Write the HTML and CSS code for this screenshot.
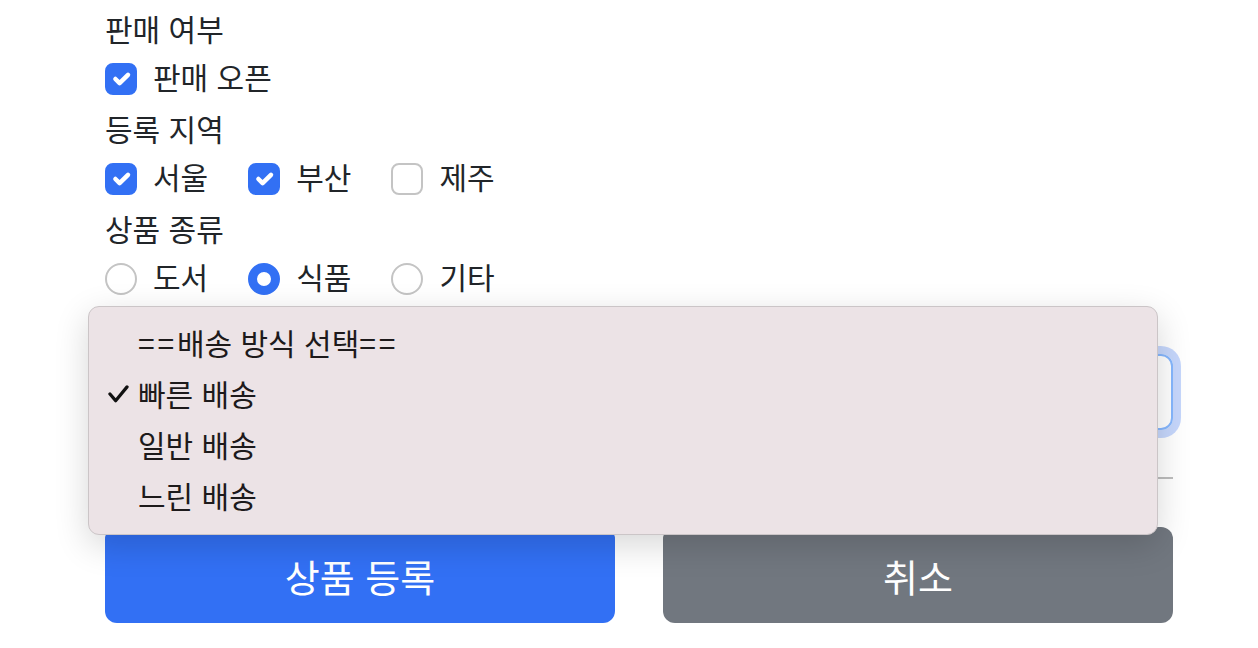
FILE: index.html
```html
<!DOCTYPE html>
<html lang="ko">
<head>
<meta charset="utf-8">
<title>상품 등록</title>
<link rel="stylesheet" href="styles.css">
</head>
<body>
<div class="page">
  <form class="form">
    <div class="label">판매 여부</div>
    <div class="checks">
      <label class="check"><span class="box on"><svg viewBox="0 0 20 20"><path d="m6 10 3 3 6-6" /></svg></span>판매 오픈</label>
    </div>
    <div class="label">등록 지역</div>
    <div class="checks">
      <label class="check"><span class="box on"><svg viewBox="0 0 20 20"><path d="m6 10 3 3 6-6" /></svg></span>서울</label>
      <label class="check"><span class="box on"><svg viewBox="0 0 20 20"><path d="m6 10 3 3 6-6" /></svg></span>부산</label>
      <label class="check"><span class="box"></span>제주</label>
    </div>
    <div class="label">상품 종류</div>
    <div class="checks">
      <label class="check"><span class="radio"></span>도서</label>
      <label class="check"><span class="radio on"></span>식품</label>
      <label class="check"><span class="radio"></span>기타</label>
    </div>
    <div class="label-spacer"></div>
    <div class="select"></div>
    <hr class="divider">
    <div class="buttons">
      <button type="button" class="btn btn-primary">상품 등록</button>
      <button type="button" class="btn btn-secondary">취소</button>
    </div>
  </form>
  <div class="dropdown">
    <div class="option"><span class="eq">==</span>배송 방식 선택<span class="eq">==</span></div>
    <div class="option selected"><svg class="tick" viewBox="0 0 22 20"><path d="M2 9.5 L8 16.5 L20 2" /></svg>빠른 배송</div>
    <div class="option">일반 배송</div>
    <div class="option">느린 배송</div>
  </div>
</div>
</body>
</html>
```

FILE: styles.css
```css
* { box-sizing: border-box; }
html, body { margin: 0; padding: 0; background: #fff; }
body {
  font-family: "Noto Sans CJK KR", "Noto Sans", sans-serif;
  color: #212529;
}
.page {
  position: relative;
  width: 1258px;
  height: 648px;
  overflow: hidden;
}
.form {
  margin-left: 105px;
  width: 1068px;
  padding-top: 4px;
}
.label {
  font-size: 30px;
  line-height: 48px;
  height: 48px;
}
.label-spacer { height: 50px; }
.checks {
  display: flex;
  height: 48px;
  margin-bottom: 4px;
}
.check {
  display: flex;
  align-items: flex-start;
  font-size: 30px;
  line-height: 48px;
  margin-right: 40px;
}
.box, .radio {
  width: 32px;
  height: 32px;
  margin-top: 11px;
  margin-right: 16px;
  border: 2px solid #c4c4c4;
  background: #fff;
  flex: none;
  display: flex;
  align-items: center;
  justify-content: center;
}
.box { border-radius: 8px; }
.box.on { background: #3270f4; border-color: #3270f4; }
.box svg { width: 30px; height: 30px; }
.box svg path { fill: none; stroke: #fff; stroke-width: 3.2; stroke-linecap: round; stroke-linejoin: round; }
.radio { border-radius: 50%; }
.radio.on {
  border: 9px solid #3270f4;
  background: #fff;
}
.select {
  height: 76px;
  border: 2px solid #86b7fe;
  border-radius: 12px;
  box-shadow: 0 0 0 8px rgba(50, 112, 244, 0.28);
}
.divider {
  border: 0;
  border-top: 2px solid #bdbdbd;
  margin: 47px 0 48px;
}
.buttons {
  display: flex;
  gap: 48px;
}
.btn {
  flex: 1;
  height: 96px;
  border: 0;
  border-radius: 12px;
  font-family: inherit;
  font-size: 38px;
  color: #fff;
}
.btn-primary { background: #3270f4; }
.btn-secondary { background: #71777f; }
.dropdown {
  position: absolute;
  left: 88px;
  top: 306px;
  width: 1070px;
  height: 229px;
  padding: 10px 0 12px;
  background: #ece3e6;
  border: 1px solid #cbc5c7;
  border-radius: 11px;
  box-shadow: 0 10px 34px rgba(0, 0, 0, 0.16);
}
.option {
  position: relative;
  height: 51px;
  line-height: 51px;
  padding-left: 49px;
  font-size: 30px;
  color: #1d1a1b;
}
.eq { letter-spacing: 2.8px; }
.tick {
  position: absolute;
  left: 19px;
  top: 17px;
  width: 21px;
  height: 19px;
}
.tick path { fill: none; stroke: #111; stroke-width: 3.4; stroke-linecap: round; stroke-linejoin: round; }
```
